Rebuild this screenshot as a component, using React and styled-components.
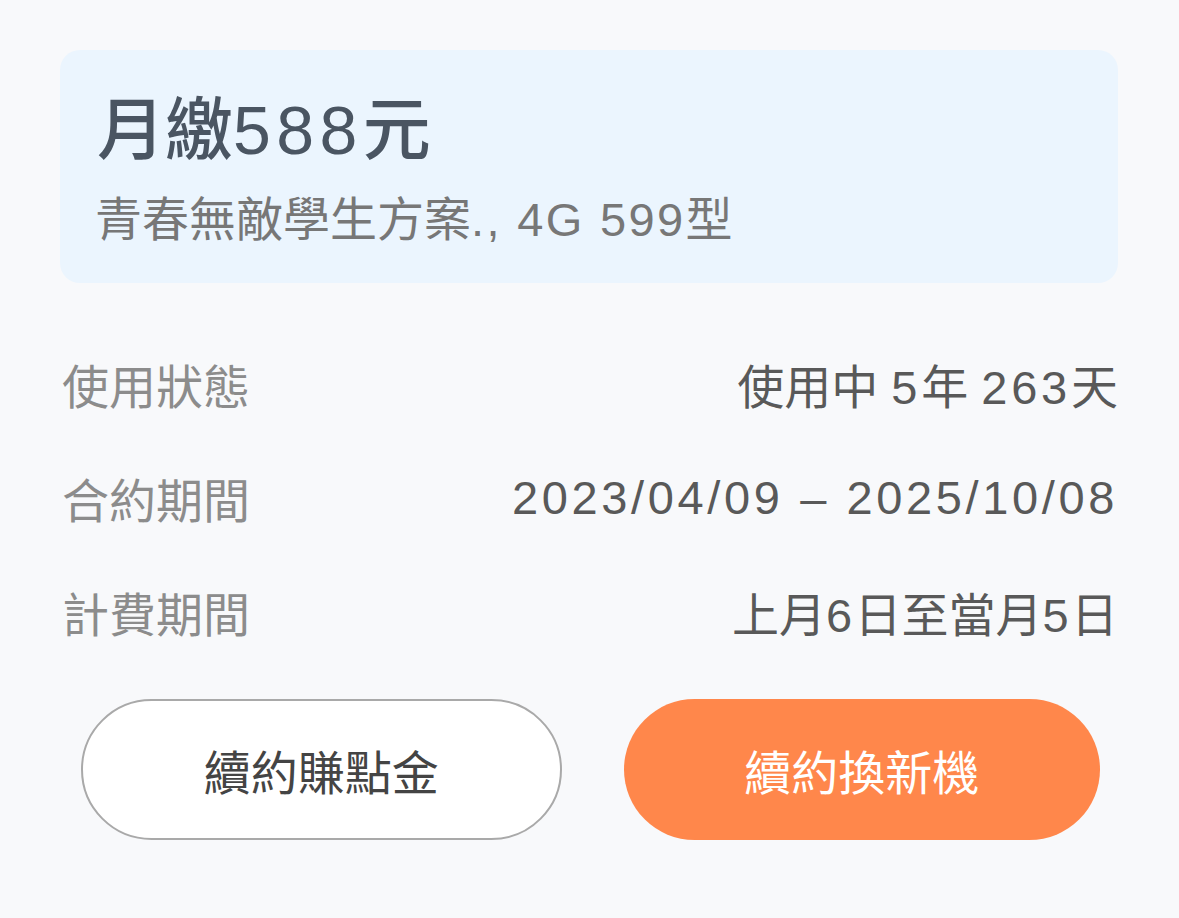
import React from 'react';
import styled, { createGlobalStyle } from 'styled-components';

const GlobalStyle = createGlobalStyle`
    html, body {
        margin: 0;
        padding: 0;
        background: #f8f9fb;
    }
    body {
        font-family: "Liberation Sans", "Noto Sans CJK TC", sans-serif;
    }
`

const Page = styled.div`
    width: 1179px;
    min-height: 918px;
    box-sizing: border-box;
    padding: 50px 61px 0 60px;
    background: #f8f9fb;
`

const PlanCard = styled.div`
    background: #ebf5fe;
    border-radius: 20px;
    padding: 39px 37px 33px 35px;
    display: flex;
    flex-direction: column;
    gap: 19px;
`

const Price = styled.div`
    font-size: 68px;
    line-height: 82px;
    font-weight: 500;
    color: #4a5562;
    padding-left: 2px;
`

const PlanName = styled.div`
    font-size: 47px;
    line-height: 60px;
    color: #777777;
`

const Num = styled.span`
    letter-spacing: ${({ wide }) => wide || '0.05em'};
`

const InfoList = styled.div`
    margin-top: 43px;
    padding: 0 0 0 2px;
    display: flex;
    flex-direction: column;
`

const InfoRow = styled.div`
    display: flex;
    justify-content: space-between;
    align-items: center;
    height: 114px;
    font-size: 47px;
`

const Label = styled.span`
    color: #8c8c8c;
`

const Value = styled.span`
    color: #595959;
    white-space: nowrap;
`

const ButtonRow = styled.div`
    margin-top: 31px;
    padding: 0 18px 0 21px;
    display: flex;
    gap: 62px;
`

const PillButton = styled.button`
    flex: 1;
    height: 141px;
    border-radius: 71px;
    box-sizing: border-box;
    font-family: inherit;
    font-size: 47px;
    cursor: pointer;
    border: ${({ primary }) => primary ? 'none' : '2px solid #a9a9a9'};
    background: ${({ primary }) => primary ? '#ff874b' : '#ffffff'};
    color: ${({ primary }) => primary ? '#ffffff' : '#444444'};
`

const rows = [
    { label: '使用狀態', value: <>使用中 <Num wide="0.08em">5</Num>年 <Num wide="0.08em">263</Num>天</> },
    { label: '合約期間', value: <Num wide="0.077em">2023/04/09 – 2025/10/08</Num> },
    { label: '計費期間', value: <>上月<Num>6</Num>日至當月<Num>5</Num>日</> },
]

function App() {
    return (
        <Page>
            <GlobalStyle />
            <PlanCard>
                <Price>月繳<Num wide="0.08em">588</Num>元</Price>
                <PlanName>青春無敵學生方案<Num>., 4G 599</Num>型</PlanName>
            </PlanCard>

            <InfoList>
                {rows.map((row) => (
                    <InfoRow key={row.label}>
                        <Label>{row.label}</Label>
                        <Value>{row.value}</Value>
                    </InfoRow>
                ))}
            </InfoList>

            <ButtonRow>
                <PillButton>續約賺點金</PillButton>
                <PillButton primary>續約換新機</PillButton>
            </ButtonRow>
        </Page>
    )
}

export default App
